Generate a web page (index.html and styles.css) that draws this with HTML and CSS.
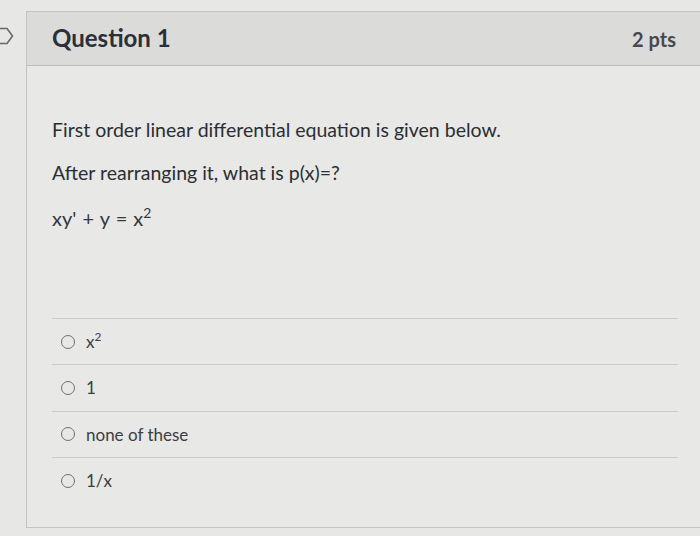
FILE: index.html
```html
<!DOCTYPE html>
<html lang="en">
<head>
<meta charset="utf-8">
<title>Question 1</title>
<link rel="stylesheet" href="styles.css">
</head>
<body>
<div class="page">
  <div class="gutter">
    <svg class="flag" width="14" height="18" viewBox="0 0 14 18" aria-hidden="true">
      <path d="M0 1.5 H7 L12.5 9 L7 16.5 H0" fill="none" stroke="#6a6a6a" stroke-width="1.6" stroke-linejoin="round"/>
    </svg>
  </div>
  <div class="card">
    <div class="header">
      <h2 class="title">Question 1</h2>
      <span class="pts">2 pts</span>
    </div>
    <div class="content">
      <div class="text">
        <p class="para">First order linear differential equation is given below.</p>
        <p class="para">After rearranging it, what is p(x)=?</p>
        <p class="eq">xy' + y = x<sup>2</sup></p>
      </div>
      <div class="answers">
        <label class="answer"><span class="radio"></span><span class="atext">x<sup>2</sup></span></label>
        <label class="answer"><span class="radio"></span><span class="atext">1</span></label>
        <label class="answer"><span class="radio"></span><span class="atext">none of these</span></label>
        <label class="answer"><span class="radio"></span><span class="atext">1/x</span></label>
      </div>
    </div>
  </div>
</div>
</body>
</html>
```
FILE: styles.css
```css
html, body {
  margin: 0;
  padding: 0;
  background: #e7e7e5;
  overflow: hidden;
  font-family: Lato, "Liberation Sans", sans-serif;
}
.page {
  display: flex;
  align-items: flex-start;
  width: 720px;
}
.gutter {
  width: 26px;
  flex: none;
  padding-top: 27px;
}
.flag {
  display: block;
}
.card {
  margin-top: 11px;
  width: 676px;
  flex: none;
  border: 1px solid #c3c3c1;
  background: #e8e8e6;
}
.header {
  height: 53px;
  background: #dbdbd9;
  border-bottom: 1px solid #bcbcba;
  display: flex;
  align-items: center;
  justify-content: space-between;
  padding: 0 27px 0 25px;
}
.title {
  margin: 0 0 2px;
  font-size: 24px;
  font-weight: 700;
  color: #2a2f3a;
}
.pts {
  font-size: 20px;
  font-weight: 700;
  color: #47494e;
}
.content {
  padding: 52px 25px 24px;
}
.para {
  margin: 0 0 19px;
  font-size: 19.5px;
  line-height: 24px;
  color: #2b2e33;
}
.eq {
  margin: 0;
  padding-top: 2px;
  font-size: 20px;
  word-spacing: 1px;
  line-height: 24px;
  color: #35383d;
}
sup {
  font-size: 0.7em;
  line-height: 0;
  vertical-align: 0.55em;
}
.answers {
  margin-top: 88px;
}
.answer {
  display: flex;
  align-items: center;
  height: 45.3px;
  border-top: 1px solid #cbcbc9;
}
.radio {
  width: 12px;
  height: 12px;
  border: 1.6px solid #707070;
  border-radius: 50%;
  margin-left: 9px;
  margin-right: 11px;
  flex: none;
}
.atext {
  font-size: 17px;
  color: #3a3d42;
}
```
